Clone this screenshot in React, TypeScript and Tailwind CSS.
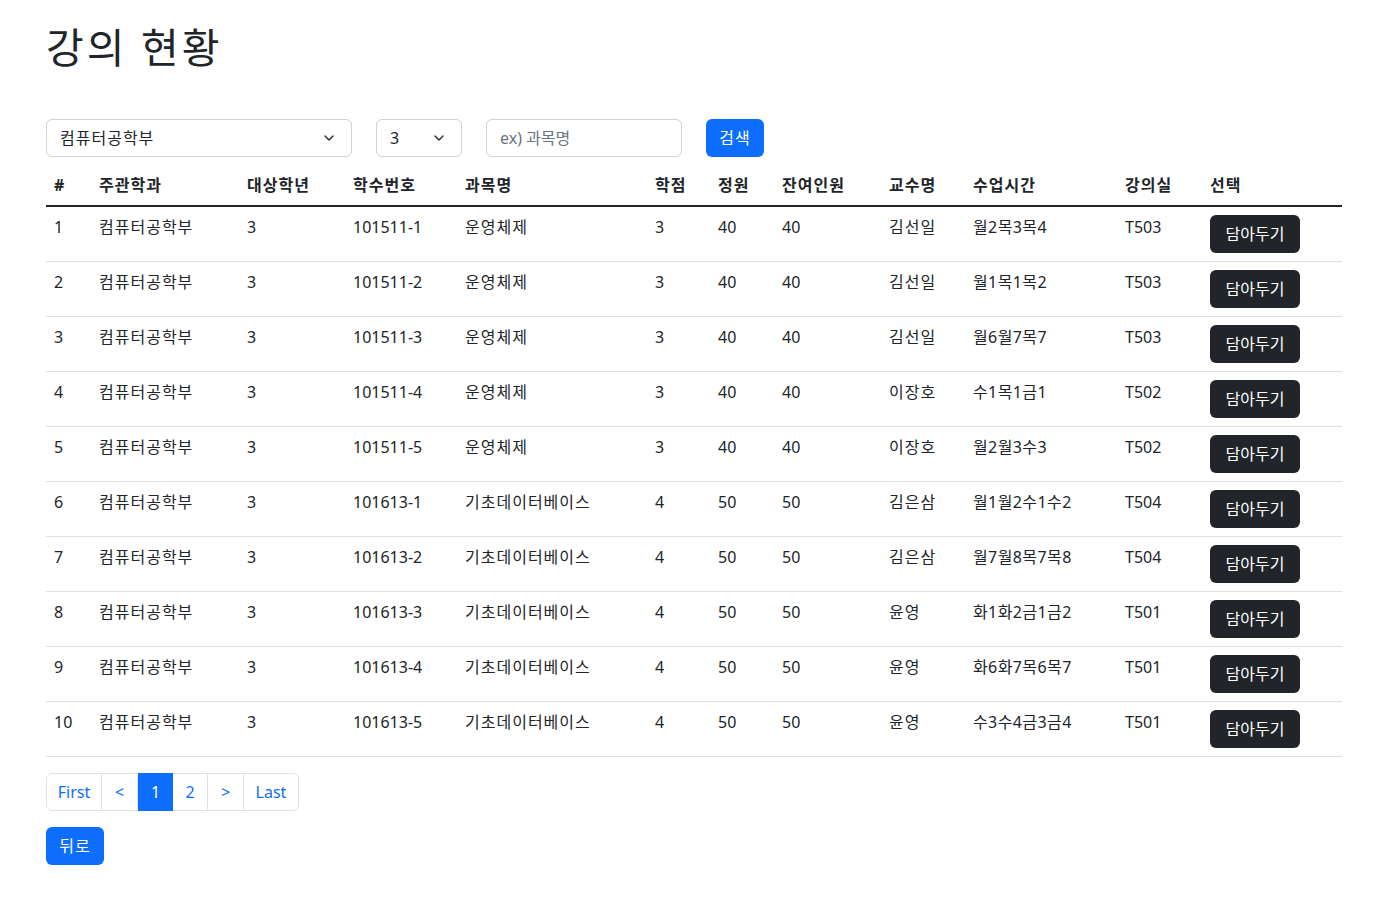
import { ChevronDown } from "lucide-react";

type Lecture = {
  code: string;
  name: string;
  credit: number;
  cap: number;
  prof: string;
  time: string;
  room: string;
};

const lectures: Lecture[] = [
  { code: "101511-1", name: "운영체제", credit: 3, cap: 40, prof: "김선일", time: "월2목3목4", room: "T503" },
  { code: "101511-2", name: "운영체제", credit: 3, cap: 40, prof: "김선일", time: "월1목1목2", room: "T503" },
  { code: "101511-3", name: "운영체제", credit: 3, cap: 40, prof: "김선일", time: "월6월7목7", room: "T503" },
  { code: "101511-4", name: "운영체제", credit: 3, cap: 40, prof: "이장호", time: "수1목1금1", room: "T502" },
  { code: "101511-5", name: "운영체제", credit: 3, cap: 40, prof: "이장호", time: "월2월3수3", room: "T502" },
  { code: "101613-1", name: "기초데이터베이스", credit: 4, cap: 50, prof: "김은삼", time: "월1월2수1수2", room: "T504" },
  { code: "101613-2", name: "기초데이터베이스", credit: 4, cap: 50, prof: "김은삼", time: "월7월8목7목8", room: "T504" },
  { code: "101613-3", name: "기초데이터베이스", credit: 4, cap: 50, prof: "윤영", time: "화1화2금1금2", room: "T501" },
  { code: "101613-4", name: "기초데이터베이스", credit: 4, cap: 50, prof: "윤영", time: "화6화7목6목7", room: "T501" },
  { code: "101613-5", name: "기초데이터베이스", credit: 4, cap: 50, prof: "윤영", time: "수3수4금3금4", room: "T501" },
];

const headers = ["#", "주관학과", "대상학년", "학수번호", "과목명", "학점", "정원", "잔여인원", "교수명", "수업시간", "강의실", "선택"];
const widths = [45, 148, 106, 112, 190, 63, 64, 107, 84, 152, 85, 140];

export default function App() {
  return (
    <div
      className="min-h-screen bg-white text-[#212529] px-[46px] pt-[23px]"
      style={{ fontFamily: '"Noto Sans", "Noto Sans CJK KR", sans-serif' }}
    >
      <h1 className="text-[41px] leading-[48px] font-normal tracking-[3px]">강의 현황</h1>

      {/* 검색 */}
      <div className="mt-[48px] flex items-center gap-6">
        <div className="w-[306px] h-[38px] border border-[#ced4da] rounded-md flex items-center justify-between pl-[13px] pr-[14px] text-base">
          <span className="tracking-[1px]">컴퓨터공학부</span>
          <ChevronDown size={16} strokeWidth={2} />
        </div>
        <div className="w-[86px] h-[38px] border border-[#ced4da] rounded-md flex items-center justify-between pl-[13px] pr-[14px] text-base">
          <span>3</span>
          <ChevronDown size={16} strokeWidth={2} />
        </div>
        <div className="w-[196px] h-[38px] border border-[#ced4da] rounded-md flex items-center pl-[13px] text-base text-[#6c757d]">
          ex) 과목명
        </div>
        <button className="h-[38px] w-[58px] rounded-md bg-[#0d6efd] text-white text-base tracking-[1px]">검색</button>
      </div>

      {/* 강의 목록 */}
      <table className="mt-2 w-[1296px] table-fixed border-collapse text-base">
        <colgroup>
          {widths.map((w, i) => (
            <col key={i} style={{ width: w }} />
          ))}
        </colgroup>
        <thead>
          <tr className="border-b-2 border-[#212529]">
            {headers.map((h) => (
              <th key={h} className="text-left font-bold p-2 leading-6 tracking-[1px]">
                {h}
              </th>
            ))}
          </tr>
        </thead>
        <tbody>
          {lectures.map((l, i) => (
            <tr key={l.code} className="border-b border-[#dee2e6] align-top">
              <td className="p-2 leading-6">{i + 1}</td>
              <td className="p-2 leading-6 tracking-[1px]">컴퓨터공학부</td>
              <td className="p-2 leading-6">3</td>
              <td className="p-2 leading-6">{l.code}</td>
              <td className="p-2 leading-6 tracking-[1px]">{l.name}</td>
              <td className="p-2 leading-6">{l.credit}</td>
              <td className="p-2 leading-6">{l.cap}</td>
              <td className="p-2 leading-6">{l.cap}</td>
              <td className="p-2 leading-6 tracking-[1px]">{l.prof}</td>
              <td className="p-2 leading-6 tracking-[0.4px]">{l.time}</td>
              <td className="p-2 leading-6">{l.room}</td>
              <td className="p-2 leading-6">
                <button className="h-[38px] w-[90px] rounded-md bg-[#212529] text-white text-base">담아두기</button>
              </td>
            </tr>
          ))}
        </tbody>
      </table>

      {/* 페이지 */}
      <div className="mt-4 flex h-[38px] w-fit text-base text-[#0d6efd]">
        <span className="w-[56px] flex items-center justify-center border border-[#dee2e6] rounded-l-md">First</span>
        <span className="w-[36px] flex items-center justify-center border border-l-0 border-[#dee2e6]">&lt;</span>
        <span className="w-[35px] flex items-center justify-center bg-[#0d6efd] text-white">1</span>
        <span className="w-[35px] flex items-center justify-center border border-l-0 border-[#dee2e6]">2</span>
        <span className="w-[36px] flex items-center justify-center border border-l-0 border-[#dee2e6]">&gt;</span>
        <span className="w-[55px] flex items-center justify-center border border-l-0 border-[#dee2e6] rounded-r-md">Last</span>
      </div>

      <button className="mt-4 h-[38px] w-[58px] rounded-md bg-[#0d6efd] text-white text-base tracking-[1px]">뒤로</button>
    </div>
  );
}
